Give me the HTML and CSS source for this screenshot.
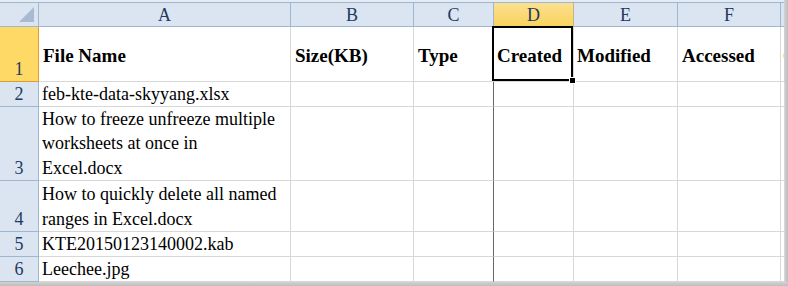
FILE: index.html
```html
<!DOCTYPE html>
<html>
<head>
<meta charset="utf-8">
<link rel="stylesheet" href="styles.css">
</head>
<body>
<div class="frame">
  <div class="sheet">
    <div class="ch corner"><span class="tri"></span></div>
    <div class="ch">A</div>
    <div class="ch">B</div>
    <div class="ch">C</div>
    <div class="ch ch-sel">D</div>
    <div class="ch">E</div>
    <div class="ch">F</div>
    <div class="ch ch-end"></div>

    <div class="rh rh-sel">1</div>
    <div class="c b mid">File Name</div>
    <div class="c b mid">Size(KB)</div>
    <div class="c b mid">Type</div>
    <div class="c b mid tight">Created<span class="sel"><span class="handle"></span></span></div>
    <div class="c b mid tight">Modified</div>
    <div class="c b mid">Accessed</div>
    <div class="c b mid clip">Changed</div>

    <div class="rh">2</div>
    <div class="c">feb-kte-data-skyyang.xlsx</div>
    <div class="c"></div>
    <div class="c dline"></div>
    <div class="c"></div>
    <div class="c"></div>
    <div class="c"></div>
    <div class="c"></div>

    <div class="rh">3</div>
    <div class="c wrap">How to freeze unfreeze multiple worksheets at once in Excel.docx</div>
    <div class="c"></div>
    <div class="c dline"></div>
    <div class="c"></div>
    <div class="c"></div>
    <div class="c"></div>
    <div class="c"></div>

    <div class="rh">4</div>
    <div class="c wrap">How to quickly delete all named ranges in Excel.docx</div>
    <div class="c"></div>
    <div class="c dline"></div>
    <div class="c"></div>
    <div class="c"></div>
    <div class="c"></div>
    <div class="c"></div>

    <div class="rh">5</div>
    <div class="c">KTE20150123140002.kab</div>
    <div class="c"></div>
    <div class="c dline"></div>
    <div class="c"></div>
    <div class="c"></div>
    <div class="c"></div>
    <div class="c"></div>

    <div class="rh">6</div>
    <div class="c">Leechee.jpg</div>
    <div class="c"></div>
    <div class="c dline"></div>
    <div class="c"></div>
    <div class="c"></div>
    <div class="c"></div>
    <div class="c"></div>
  </div>
</div>
</body>
</html>
```

FILE: styles.css
```css
* { box-sizing: border-box; }
html, body {
  margin: 0;
  padding: 0;
  width: 788px;
  height: 286px;
  overflow: hidden;
  background: #ffffff;
}
.frame {
  width: 788px;
  height: 286px;
  padding-top: 2px;
  background: #e4ebf4;
  position: relative;
}
.frame::before {
  content: "";
  position: absolute;
  left: 784px; top: 0;
  width: 4px; height: 286px;
  background: linear-gradient(to right, #d2d2d2, #bdbdbd);
}
.frame::after {
  content: "";
  position: absolute;
  left: 0; top: 282px;
  width: 788px; height: 4px;
  background: linear-gradient(to bottom, #d2d2d2, #bdbdbd);
}
.sheet {
  display: grid;
  grid-template-columns: 39px 252px 123px 80px 80px 104px 103px 3px;
  grid-template-rows: 25px 55px 25px 74px 51px 25px 25px;
  width: 784px;
  background: #ffffff;
  font-family: "Liberation Serif", "Times New Roman", serif;
  font-size: 18px;
  color: #000000;
}
.ch {
  background: #dbe5f1;
  border-top: 1px solid #9eb6ce;
  border-right: 1px solid #9eb6ce;
  border-bottom: 1px solid #9eb6ce;
  color: #243a5e;
  display: flex;
  align-items: center;
  justify-content: center;
  line-height: 22px;
  padding-top: 1px;
}
.ch-end { border-right: none; }
.ch-sel {
  background: linear-gradient(to bottom, #fbe08e, #f9d35f);
  border-bottom-color: #e5a33b;
  border-right-color: #c8b57a;
}
.corner {
  position: relative;
  background: #dbe5f1;
}
.tri {
  position: absolute;
  right: 4px;
  bottom: 4px;
  width: 0;
  height: 0;
  border-left: 15px solid transparent;
  border-bottom: 15px solid #a9b9d1;
}
.rh {
  background: #dbe5f1;
  border-right: 1px solid #9eb6ce;
  border-bottom: 1px solid #9eb6ce;
  color: #243a5e;
  display: flex;
  align-items: flex-end;
  justify-content: center;
  line-height: 24px;
}
.rh-sel {
  background: #fed965;
  border-right-color: #e19a2f;
  border-bottom-color: #e19a2f;
}
.c {
  border-right: 1px solid #d8d8d8;
  border-bottom: 1px solid #d8d8d8;
  padding: 0 0 0 3px;
  line-height: 24.5px;
  white-space: nowrap;
  position: relative;
  display: flex;
  align-items: flex-end;
}
.c.wrap {
  white-space: normal;
  padding-right: 10px;
}
.c.b {
  font-weight: bold;
  font-size: 19px;
}
.c.mid {
  align-items: center;
  padding-left: 4px;
  padding-top: 4px;
}
.c.tight { padding-left: 3px; }
.c.clip {
  overflow: hidden;
  border-right: none;
  padding-left: 2px;
}
.c.dline { border-right-color: #676767; }
.sel {
  position: absolute;
  left: -2px;
  top: -1px;
  right: 0;
  bottom: 0;
  border: 2px solid #000000;
  z-index: 2;
}
.handle {
  position: absolute;
  right: -5px;
  bottom: -5px;
  width: 7px;
  height: 7px;
  background: #000000;
  border: 1px solid #ffffff;
}
```
